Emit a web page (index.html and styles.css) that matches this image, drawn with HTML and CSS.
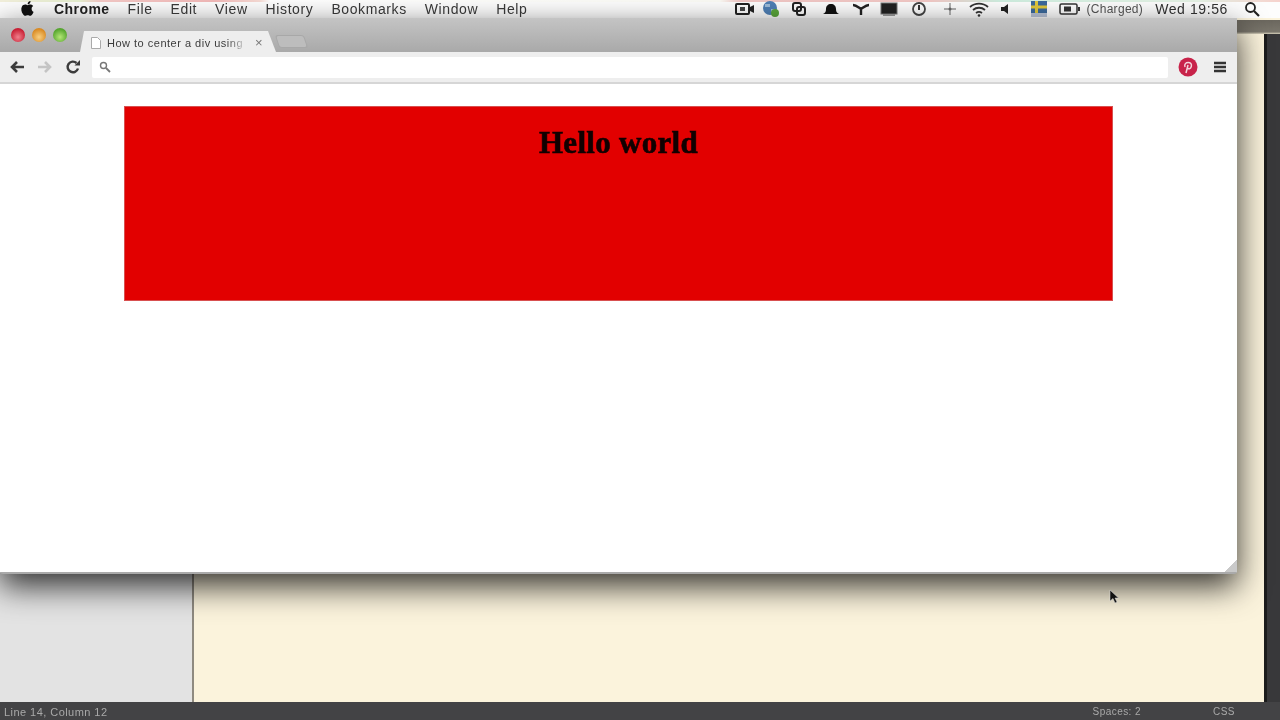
FILE: index.html
```html
<!DOCTYPE html>
<html lang="en">
<head>
<meta charset="utf-8">
<title>How to center a div</title>
<link rel="stylesheet" href="styles.css">
</head>
<body>
<div class="desktop">
  <header class="menubar">
    <div class="menu-left">
      <svg class="apple" viewBox="0 0 16 18" width="16" height="17"><path d="M11.8 9.4c0-2 1.600-2.900 1.700-3-1-1.400-2.400-1.600-2.900-1.600-1.200-.1-2.400.7-3 .7s-1.600-.7-2.600-.7C3.600 4.800 2.300 5.600 1.600 6.800.2 9.200 1.200 12.800 2.600 14.800c.7 1 1.500 2 2.500 2 1 0 1.400-.6 2.600-.6s1.600.6 2.600.6c1.100 0 1.800-1 2.500-2 .8-1.100 1.100-2.200 1.100-2.300-.1 0-2.100-.8-2.100-3.100zM9.900 3.500c.5-.7.9-1.600.8-2.500-.8 0-1.700.5-2.300 1.200-.5.600-.9 1.500-.8 2.400.9.100 1.800-.4 2.300-1.100z" fill="#111"/></svg>
      <span class="menu-item app-name">Chrome</span>
      <span class="menu-item">File</span>
      <span class="menu-item">Edit</span>
      <span class="menu-item">View</span>
      <span class="menu-item">History</span>
      <span class="menu-item">Bookmarks</span>
      <span class="menu-item">Window</span>
      <span class="menu-item">Help</span>
    </div>
    <div class="menu-right">
      <svg class="tray t-cam" viewBox="0 0 20 12" width="20" height="12"><rect x="1" y="1" width="13" height="10" rx="1" fill="none" stroke="#222" stroke-width="2"/><rect x="5" y="4" width="5" height="4" fill="#444"/><path d="M15 4l4-2v8l-4-2z" fill="#222"/></svg>
      <svg class="tray t-globe" viewBox="0 0 18 18" width="18" height="18"><circle cx="8" cy="8" r="7" fill="#4f7fb5"/><path d="M3 4h5v3H3zM9 9h4v3H9z" fill="#9dbbd8"/><circle cx="13" cy="13" r="4" fill="#5aa63a"/></svg>
      <svg class="tray t-dup" viewBox="0 0 14 14" width="14" height="14"><rect x="1" y="1" width="8" height="8" rx="2" fill="none" stroke="#222" stroke-width="2"/><rect x="5" y="5" width="8" height="8" rx="2" fill="none" stroke="#222" stroke-width="2"/></svg>
      <svg class="tray t-bell" viewBox="0 0 18 12" width="18" height="12"><path d="M1 11c2-1 3-2 3-5 0-3 2-5 5-5s5 2 5 5c0 3 1 4 3 5z" fill="#111"/></svg>
      <svg class="tray t-fork" viewBox="0 0 18 12" width="18" height="12"><path d="M1 2c3 0 5 2 8 4 3-2 5-4 8-4M9 6v6" fill="none" stroke="#222" stroke-width="2.400"/></svg>
      <svg class="tray t-screen" viewBox="0 0 18 14" width="18" height="14"><rect x="1" y="1" width="16" height="11" fill="#222" stroke="#777"/><rect x="3" y="12" width="12" height="2" fill="#999"/></svg>
      <svg class="tray t-clock" viewBox="0 0 16 16" width="16" height="16"><circle cx="8" cy="8" r="6" fill="none" stroke="#444" stroke-width="1.800"/><path d="M8 4v5" stroke="#333" stroke-width="2"/></svg>
      <svg class="tray t-move" viewBox="0 0 14 14" width="14" height="14"><path d="M7 1v12M1 7h12" stroke="#999" stroke-width="1.500"/><circle cx="7" cy="7" r="1.500" fill="#666"/></svg>
      <svg class="tray t-wifi" viewBox="0 0 20 15" width="20" height="15"><path d="M1 5c5-4.500 13-4.500 18 0M4 8c3.500-3 8.500-3 12 0M7 11c2-1.500 4-1.500 6 0" fill="none" stroke="#333" stroke-width="1.800"/><circle cx="10" cy="13.500" r="1.300" fill="#333"/></svg>
      <svg class="tray t-vol" viewBox="0 0 13 10" width="13" height="10"><path d="M2 3h3l4-3v10L5 7H2z" fill="#222"/></svg>
      <svg class="tray t-flag" viewBox="0 0 16 16" width="16" height="16"><rect width="16" height="12" fill="#3c6a9c"/><rect x="4" width="3" height="12" fill="#e0c83c"/><rect y="4.500" width="16" height="3" fill="#e0c83c"/><rect y="12" width="16" height="4" fill="#b9c4d8"/></svg>
      <svg class="tray t-batt" viewBox="0 0 21 12" width="21" height="12"><rect x="1" y="1" width="17" height="10" rx="1.500" fill="none" stroke="#333" stroke-width="1.500"/><rect x="5" y="3.500" width="7" height="5" fill="#333"/><rect x="19" y="4" width="2" height="4" fill="#333"/></svg>
      <span class="charged">(Charged)</span>
      <span class="clock">Wed 19:56</span>
      <svg class="tray t-search" viewBox="0 0 16 16" width="16" height="16"><circle cx="6.500" cy="6.500" r="4.500" fill="none" stroke="#222" stroke-width="1.800"/><path d="M10 10l5 5" stroke="#222" stroke-width="2.200"/></svg>
    </div>
  </header>

  <main class="editor-app">
    <div class="editor-titlebar"></div>
    <div class="editor-body">
      <aside class="sidebar"></aside>
      <section class="code-pane"></section>
      <div class="minimap"></div>
    </div>
    <footer class="statusbar">
      <span class="status-pos">Line 14, Column 12</span>
      <span class="status-right">
        <span class="status-spaces">Spaces: 2</span>
        <span class="status-syntax">CSS</span>
      </span>
    </footer>
  </main>

  <section class="browser">
    <div class="tabstrip">
      <div class="lights">
        <span class="light red"></span>
        <span class="light amber"></span>
        <span class="light green"></span>
      </div>
      <div class="tab">
        <svg class="tab-doc" viewBox="0 0 10 12" width="10" height="12"><path d="M.500.500h6l3 3v8h-9z" fill="#fff" stroke="#aaa"/></svg>
        <span class="tab-title">How to center a div using</span>
        <span class="tab-close">×</span>
      </div>
      <div class="new-tab"></div>
    </div>
    <div class="toolbar">
      <svg class="nav nav-back" viewBox="0 0 16 14" width="16" height="14"><path d="M15 7H4M8 2L3 7l5 5" fill="none" stroke="#3c3c3c" stroke-width="2.600"/></svg>
      <svg class="nav nav-fwd" viewBox="0 0 16 14" width="16" height="14"><path d="M1 7h11M8 2l5 5-5 5" fill="none" stroke="#c4c4c4" stroke-width="2.600"/></svg>
      <svg class="nav nav-reload" viewBox="0 0 16 16" width="16" height="16"><path d="M13 9.500A5.300 5.300 0 1 1 11.500 4" fill="none" stroke="#3c3c3c" stroke-width="2.400"/><path d="M9.500 6.500H15V1z" fill="#3c3c3c"/></svg>
      <div class="omnibox">
        <svg class="omni-icon" viewBox="0 0 12 12" width="12" height="12"><circle cx="4.500" cy="4.500" r="3" fill="none" stroke="#777" stroke-width="1.400"/><path d="M7 7l4 4" stroke="#777" stroke-width="1.800"/></svg>
      </div>
      <svg class="pin" viewBox="0 0 20 20" width="20" height="20"><circle cx="10" cy="10" r="9.500" fill="#c8234a"/><path d="M8 16l2-8M7 10c-1-3 1-4.500 3.200-4.500S14 7 13.300 9.500 10.500 12.500 9.500 11" fill="none" stroke="#f3d5dc" stroke-width="1.500"/></svg>
      <svg class="hamburger" viewBox="0 0 14 12" width="14" height="12"><path d="M1 2h12M1 6h12M1 10h12" stroke="#333" stroke-width="2.600"/></svg>
    </div>
    <div class="viewport">
      <div class="demo-box">
        <h1 class="demo-title">Hello world</h1>
      </div>
    </div>
    <div class="resize-grip"></div>
  </section>

  <svg class="cursor" viewBox="0 0 10 15" width="10" height="15"><path d="M1 1v11l3-2.500 2 4.500 2-1-2-4h3.500z" fill="#111" stroke="#ddd" stroke-width=".5"/></svg>
</div>
</body>
</html>
```

FILE: styles.css
```css
* { box-sizing: border-box; }

html, body {
  margin: 0;
  padding: 0;
  width: 1280px;
  height: 720px;
  overflow: hidden;
  background: #fbf3dc;
}

.desktop {
  position: relative;
  width: 1280px;
  height: 720px;
  display: flex;
  flex-direction: column;
  background: #fbf3dc;
  overflow: hidden;
  font-family: "Liberation Sans", Arial, sans-serif;
  filter: blur(0.55px);
}

/* Menu bar */
.menubar {
  flex: 0 0 18px;
  height: 18px;
  display: flex;
  justify-content: space-between;
  align-items: center;
  padding: 0 0 0 20px;
  background:
    linear-gradient(90deg, #f3f0dc 0, #e6efd0 80px, #f4c9c6 100px, #f2b9b8 215px, #f7dcd5 260px, #fff 270px, #fbfbf5 720px, #f0c6c4 740px, #f2c8c5 930px, #cfeee0 1000px, #e7f3e6 1200px, #f6d2cd 1280px) top / 100% 2px no-repeat,
    #fdfdfd;
  color: #2e2e2e;
  font-size: 14px;
}

.menu-left {
  display: flex;
  align-items: center;
}

.apple { margin: -1px 18px 0 0; }

.menu-item {
  margin-right: 18px;
  color: #3a3a3a;
  line-height: 16px;
  letter-spacing: 0.6px;
}

.app-name {
  font-weight: bold;
  color: #222;
  letter-spacing: 0.45px;
}

.menu-right {
  display: flex;
  align-items: center;
  padding-right: 20px;
}

.tray { display: block; }
.t-cam { margin: 0 7px 0 0; }
.t-globe { margin-right: 12px; }
.t-dup { margin-right: 16px; }
.t-bell { margin-right: 12px; }
.t-fork { margin-right: 10px; }
.t-screen { margin-right: 13px; }
.t-clock { margin-right: 16px; }
.t-move { margin-right: 12px; }
.t-wifi { margin-right: 10px; }
.t-vol { margin-right: 19px; }
.t-flag { margin-right: 12px; }
.t-batt { margin-right: 6px; }

.charged {
  font-size: 12px;
  letter-spacing: 0.3px;
  color: #555;
  margin-right: 12px;
}

.clock {
  font-size: 14px;
  letter-spacing: 0.6px;
  color: #333;
  margin-right: 16px;
}

/* Editor behind the browser */
.editor-app {
  flex: 1;
  min-height: 0;
  display: flex;
  flex-direction: column;
}

.editor-titlebar {
  flex: 0 0 14px;
  margin-top: 2px;
  background: linear-gradient(#6b675e, #7a766c 85%, #d8d2bd);
}

.editor-body {
  flex: 1;
  min-height: 0;
  display: flex;
  position: relative;
}

.sidebar {
  flex: 0 0 194px;
  background: #e3e3e3;
  border-right: 2px solid #8f8a80;
}

.code-pane {
  flex: 1;
  background: #fbf3dc;
}

.minimap {
  flex: 0 0 16px;
  background: #38383a;
  border-left: 3px solid #1c1c1c;
}

.statusbar {
  flex: 0 0 18px;
  background: #434345;
  color: #a9a9a9;
  font-size: 11px;
  display: flex;
  justify-content: space-between;
  align-items: center;
  padding: 1px 45px 0 4px;
  letter-spacing: 0.45px;
}

.status-right {
  display: flex;
  font-size: 10px;
}

.status-spaces { margin-right: 72px; }

/* Browser window */
.browser {
  position: absolute;
  left: 0;
  top: 18px;
  width: 1237px;
  height: 556px;
  display: flex;
  flex-direction: column;
  border-bottom: 2px solid #aaa;
  box-shadow: 0 12px 32px rgba(0, 0, 0, 0.8);
  background: #fff;
  border-radius: 0 0 3px 3px;
}

.tabstrip {
  flex: 0 0 34px;
  position: relative;
  display: flex;
  align-items: flex-end;
  background: linear-gradient(#c4c4c4, #a9a9a9);
}

.lights {
  display: flex;
  align-items: center;
  gap: 7px;
  align-self: flex-start;
  margin: 10px 0 0 11px;
}

.light {
  width: 14px;
  height: 14px;
  border-radius: 50%;
}

.red { background: radial-gradient(circle at 50% 65%, #f0808c, #c81f34 70%); }
.amber { background: radial-gradient(circle at 50% 65%, #f8cf80, #d98a23 70%); }
.green { background: radial-gradient(circle at 50% 65%, #b4e676, #55a52e 70%); }

.tab {
  flex: none;
  width: 196px;
  height: 21px;
  margin-left: 13px;
  padding: 2px 0 0 11px;
  display: flex;
  align-items: center;
  background: #eeeeee;
  border-radius: 5px 5px 0 0;
  clip-path: polygon(0 100%, 4px 0, 188px 0, 196px 100%);
}

.tab-doc { margin-right: 6px; flex: none; }

.tab-title {
  flex: none;
  font-size: 11px;
  white-space: nowrap;
  color: #3c3c3c;
  letter-spacing: 0.5px;
  -webkit-mask-image: linear-gradient(90deg, #000 88%, rgba(0, 0, 0, 0.25) 100%);
  mask-image: linear-gradient(90deg, #000 88%, rgba(0, 0, 0, 0.25) 100%);
}

.tab-close {
  flex: none;
  font-size: 13px;
  line-height: 12px;
  color: #777;
  margin-left: 12px;
}

.new-tab {
  width: 29px;
  height: 13px;
  margin: 0 0 4px 1px;
  background: #bdbdbd;
  border: 1px solid #a8a8a8;
  border-radius: 3px;
  transform: skewX(18deg);
}

.toolbar {
  flex: 0 0 32px;
  display: flex;
  align-items: center;
  padding: 0 10px 0 9px;
  background: #eeeeee;
  border-bottom: 2px solid #d6d6d6;
}

.nav { flex: none; display: block; }
.nav-back { margin-right: 12px; }
.nav-fwd { margin-right: 12px; }
.nav-reload { margin-right: 11px; }

.omnibox {
  flex: 1;
  height: 21px;
  margin-right: 10px;
  padding-left: 7px;
  display: flex;
  align-items: center;
  background: #fff;
  border-radius: 2px;
}

.pin { flex: none; margin-right: 15px; }
.hamburger { flex: none; }

.viewport {
  flex: 1;
  min-height: 0;
  background: #fff;
  padding-top: 22px;
}

.demo-box {
  width: 989px;
  height: 195px;
  margin-left: 124px;
  padding-top: 18px;
  background: #e20000;
  border: 1px solid #d85050;
}

.demo-title {
  margin: 0;
  text-align: center;
  font-family: "Liberation Serif", "Times New Roman", serif;
  font-size: 31px;
  line-height: 35px;
  font-weight: bold;
  letter-spacing: 0.3px;
  color: #110000;
  -webkit-text-stroke: 0.6px #110000;
}

.resize-grip {
  position: absolute;
  right: 0;
  bottom: 0;
  width: 13px;
  height: 13px;
  background: linear-gradient(135deg, transparent 50%, #c9c9c9 50%);
}

.cursor {
  position: absolute;
  left: 1109px;
  top: 589px;
}
```
